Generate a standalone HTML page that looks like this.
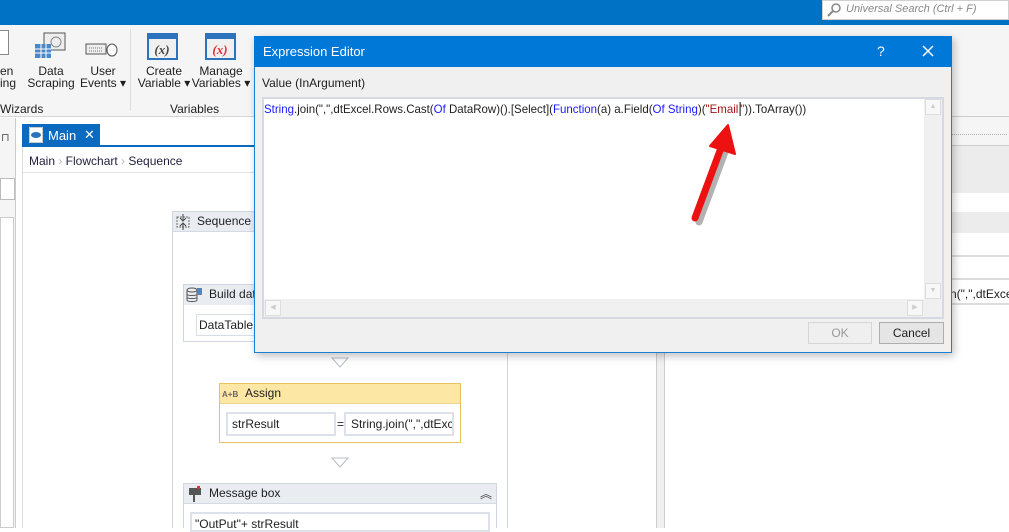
<!DOCTYPE html>
<html><head><meta charset="utf-8"><style>
*{margin:0;padding:0;box-sizing:border-box}
body{width:1009px;height:528px;overflow:hidden;background:#fff;font-family:"Liberation Sans",sans-serif;font-size:12px;color:#1e1e1e;position:relative}
.a{position:absolute}
.t{white-space:nowrap}
</style></head><body>
<!-- top bar -->
<div class="a" style="left:0;top:0;width:1009px;height:25px;background:#0072c6"></div>
<div class="a" style="left:822px;top:0;width:187px;height:20px;background:#fff;border:1px solid #d0d0d0"></div>
<svg class="a" style="left:826px;top:2px" width="16" height="16"><circle cx="10" cy="6" r="4" fill="none" stroke="#888" stroke-width="1.5"/><line x1="7" y1="9" x2="2" y2="14" stroke="#888" stroke-width="2"/></svg>
<div class="a t" style="left:846px;top:3px;font-size:11px;font-style:italic;color:#888">Universal Search (Ctrl + F)</div>
<!-- ribbon -->
<div class="a" style="left:0;top:25px;width:1009px;height:92px;background:#f5f5f5;border-bottom:1px solid #d6d6d6"></div>
<div class="a" style="left:0;top:30px;width:9px;height:25px;border:1px solid #888;border-left:none;background:#fff"></div>
<div class="a t" style="left:0;top:65px;line-height:12px;font-size:12px">en<br>ing</div>
<svg class="a" style="left:33px;top:32px" width="34" height="30"><rect x="11" y="1" width="21" height="17" fill="#eee" stroke="#555"/><circle cx="23" cy="10" r="5" fill="none" stroke="#888"/><rect x="2" y="12" width="16" height="14" fill="#4a88c8"/><path d="M2 17h16M2 21h16M8 12v14M13 12v14" stroke="#fff"/></svg>
<div class="a t" style="left:26px;top:65px;line-height:12px;font-size:12px;text-align:center;width:50px">Data<br>Scraping</div>
<svg class="a" style="left:84px;top:38px" width="36" height="20"><rect x="2" y="6" width="20" height="10" fill="#eee" stroke="#555"/><path d="M5 10h14M5 13h14" stroke="#777" stroke-dasharray="1 1"/><ellipse cx="28" cy="12" rx="5" ry="6" fill="#fff" stroke="#555"/></svg>
<div class="a t" style="left:80px;top:65px;line-height:12px;font-size:12px;text-align:center;width:46px">User<br>Events ▾</div>
<div class="a t" style="left:0;top:102px;font-size:12px">Wizards</div>
<div class="a" style="left:130px;top:29px;width:1px;height:82px;background:#ddd"></div>
<svg class="a" style="left:146px;top:32px" width="34" height="28"><rect x="1" y="1" width="31" height="27" fill="#2b73bc"/><rect x="3" y="7" width="27" height="19" fill="#f0f0f0"/><text x="16" y="22" font-size="13" font-weight="bold" font-style="italic" text-anchor="middle" fill="#444" font-family="Liberation Serif">(x)</text></svg>
<div class="a t" style="left:136px;top:65px;line-height:12px;font-size:12px;text-align:center;width:56px">Create<br>Variable ▾</div>
<svg class="a" style="left:204px;top:32px" width="34" height="28"><rect x="1" y="1" width="31" height="27" fill="#2b73bc"/><rect x="3" y="7" width="27" height="19" fill="#f0f0f0"/><text x="16" y="22" font-size="13" font-weight="bold" font-style="italic" text-anchor="middle" fill="#e0303a" font-family="Liberation Serif">(x)</text></svg>
<div class="a t" style="left:190px;top:65px;line-height:12px;font-size:12px;text-align:center;width:62px">Manage<br>Variables ▾</div>
<div class="a t" style="left:170px;top:102px;font-size:12px">Variables</div>
<!-- left panel -->
<div class="a" style="left:0;top:118px;width:16px;height:410px;background:#f5f5f5;border-right:1px solid #ccc"></div>
<div class="a t" style="left:1px;top:131px;font-size:11px;color:#555">⊓</div>
<div class="a" style="left:0;top:178px;width:15px;height:22px;background:#fff;border:1px solid #bbb"></div>
<div class="a" style="left:0;top:217px;width:14px;height:311px;background:#fff;border:1px solid #ccc"></div>
<!-- tab -->
<div class="a" style="left:22px;top:124px;width:78px;height:22px;background:#0a6ac0"></div>
<svg class="a" style="left:29px;top:127px" width="14" height="16"><rect x="0.5" y="0.5" width="13" height="15" fill="#fff" stroke="#ccc"/><ellipse cx="7" cy="8" rx="5" ry="3" fill="#2b73bc"/></svg>
<div class="a t" style="left:48px;top:128px;font-size:13px;color:#fff">Main</div>
<div class="a t" style="left:84px;top:127px;font-size:13px;color:#fff">✕</div>
<div class="a" style="left:22px;top:145px;width:640px;height:2px;background:#0a6ac0"></div>
<div class="a" style="left:22px;top:147px;width:1px;height:381px;background:#ddd"></div>
<div class="a" style="left:23px;top:172px;width:640px;height:1px;background:#e4e4e4"></div>
<div class="a t" style="left:29px;top:154px;font-size:12px;color:#1e1e3e">Main <span style="color:#bbb">›</span> Flowchart <span style="color:#bbb">›</span> Sequence</div>
<!-- right separator and panel -->
<div class="a" style="left:656px;top:118px;width:9px;height:410px;background:#f0f0f0;border-left:1px solid #ccc;border-right:1px solid #ccc"></div>
<div class="a" style="left:665px;top:116px;width:344px;height:30px;background:#f5f5f5;border-top:1px solid #ccc;border-bottom:1px solid #ccc"></div>
<div class="a" style="left:952px;top:134px;width:55px;height:1px;border-top:1px dotted #aaa"></div>
<div class="a" style="left:665px;top:146px;width:344px;height:47px;background:#ececec"></div>
<div class="a" style="left:665px;top:212px;width:344px;height:21px;background:#ececec"></div>
<div class="a" style="left:665px;top:255px;width:344px;height:2px;background:#ddd"></div>
<div class="a" style="left:665px;top:278px;width:344px;height:27px;background:#fff;border-top:2px solid #ddd;border-bottom:2px solid #ddd"></div>
<div class="a t" style="left:950px;top:287px;font-size:12px">n(",",dtExcel</div>
<!-- sequence -->
<div class="a" style="left:172px;top:211px;width:336px;height:317px;border:1px solid #cfd6e2;border-bottom:none"></div>
<div class="a" style="left:173px;top:212px;width:334px;height:20px;background:#e9edf2;border-bottom:1px solid #d4dae4"></div>
<svg class="a" style="left:175px;top:214px" width="16" height="16"><rect x="2" y="3" width="12" height="10" fill="none" stroke="#666" stroke-dasharray="2 1"/><path d="M8 0v6M5 4l3 3 3-3M8 16v-6M5 12l3-3 3 3" stroke="#444" fill="none"/></svg>
<div class="a t" style="left:197px;top:214px;font-size:12px">Sequence</div>
<!-- build data -->
<div class="a" style="left:183px;top:284px;width:200px;height:58px;border:1px solid #cfd6e2"></div>
<div class="a" style="left:184px;top:285px;width:198px;height:20px;background:#e9edf2"></div>
<svg class="a" style="left:185px;top:286px" width="18" height="18"><ellipse cx="7" cy="4" rx="5" ry="2" fill="none" stroke="#555"/><path d="M2 4v10c0 2 10 2 10 0V4M2 8c0 2 10 2 10 0M2 11c0 2 10 2 10 0" fill="none" stroke="#555"/><rect x="12" y="2" width="5" height="7" fill="#4a88c8"/></svg>
<div class="a t" style="left:209px;top:287px;font-size:12px">Build dat</div>
<div class="a" style="left:196px;top:314px;width:70px;height:22px;border:1px solid #d8dde6;background:#fff"></div>
<div class="a t" style="left:199px;top:318px;font-size:12px">DataTable.</div>
<!-- triangles -->
<svg class="a" style="left:331px;top:357px" width="18" height="11"><path d="M1 1h16L9 10z" fill="#fff" stroke="#b8bcc6"/></svg>
<svg class="a" style="left:331px;top:457px" width="18" height="11"><path d="M1 1h16L9 10z" fill="#fff" stroke="#b8bcc6"/></svg>
<!-- assign -->
<div class="a" style="left:219px;top:383px;width:242px;height:60px;border:1px solid #e8c25c;background:#fff"></div>
<div class="a" style="left:220px;top:384px;width:240px;height:20px;background:#fde7a4;border-bottom:1px solid #eed590"></div>
<div class="a t" style="left:222px;top:390px;font-size:8px;font-weight:bold;color:#666">A+B</div>
<div class="a t" style="left:245px;top:386px;font-size:12px">Assign</div>
<div class="a" style="left:226px;top:412px;width:110px;height:24px;border:2px solid #dde2ea;background:#fff"></div>
<div class="a t" style="left:232px;top:417px;font-size:12px">strResult</div>
<div class="a t" style="left:337px;top:417px;font-size:12px">=</div>
<div class="a" style="left:344px;top:412px;width:110px;height:24px;border:2px solid #dde2ea;background:#fff;overflow:hidden"><div class="t" style="padding:3px 0 0 5px;font-size:12px">String.join(",",dtExc</div></div>
<!-- message box -->
<div class="a" style="left:183px;top:483px;width:314px;height:45px;border:1px solid #cfd6e2;border-bottom:none"></div>
<div class="a" style="left:184px;top:484px;width:312px;height:20px;background:#e9edf2;border-bottom:1px solid #d4dae4"></div>
<svg class="a" style="left:187px;top:486px" width="16" height="16"><rect x="2" y="2" width="12" height="7" fill="#555"/><rect x="10" y="0" width="3" height="3" fill="#d33"/><path d="M7 9v7" stroke="#555" stroke-width="2"/></svg>
<div class="a t" style="left:209px;top:486px;font-size:12px">Message box</div>
<div class="a t" style="left:480px;top:485px;font-size:12px;color:#444">︽</div>
<div class="a" style="left:190px;top:512px;width:300px;height:20px;border:2px solid #dde2ea;background:#fff"><div class="t" style="padding:3px 0 0 3px;font-size:12px">"OutPut"+  strResult</div></div>
<!-- dialog -->
<div class="a" style="left:254px;top:36px;width:698px;height:317px;background:#f0f0f0;border:1px solid #1a80d4;box-shadow:2px 3px 8px rgba(0,0,0,.25)"></div>
<div class="a" style="left:254px;top:36px;width:698px;height:31px;background:#0078d7"></div>
<div class="a t" style="left:263px;top:44px;font-size:13px;color:#fff">Expression Editor</div>
<div class="a t" style="left:877px;top:43px;font-size:14px;color:#fff">?</div>
<svg class="a" style="left:922px;top:45px" width="12" height="12"><path d="M1 1l10 10M11 1L1 11" stroke="#fff" stroke-width="1.5"/></svg>
<div class="a t" style="left:262px;top:76px;font-size:12px">Value (InArgument)</div>
<div class="a" style="left:262px;top:97px;width:682px;height:222px;background:#fff;border:2px solid #d4d9e2"></div>
<div class="a" style="left:264px;top:299px;width:678px;height:18px;background:#f0f0f0"></div>
<div class="a" style="left:924px;top:99px;width:18px;height:200px;background:#f0f0f0"></div>
<div class="a" style="left:925px;top:99px;width:16px;height:16px;border:1px solid #ddd;background:#f7f7f7;font-size:7px;color:#ccc;text-align:center;line-height:14px">▲</div>
<div class="a" style="left:925px;top:283px;width:16px;height:16px;border:1px solid #ddd;background:#f7f7f7;font-size:7px;color:#ccc;text-align:center;line-height:14px">▼</div>
<div class="a" style="left:265px;top:300px;width:16px;height:16px;border:1px solid #ddd;background:#f7f7f7;font-size:7px;color:#ccc;text-align:center;line-height:14px">◀</div>
<div class="a" style="left:907px;top:300px;width:16px;height:16px;border:1px solid #ddd;background:#f7f7f7;font-size:7px;color:#ccc;text-align:center;line-height:14px">▶</div>
<div class="a t" style="left:264px;top:102px;font-size:12px;transform:scaleX(0.957);transform-origin:left"><span style="color:#1a1aff">String</span>.join(",",dtExcel.Rows.Cast(<span style="color:#1a1aff">Of</span> DataRow)().[Select](<span style="color:#1a1aff">Function</span>(a) a.Field(<span style="color:#1a1aff">Of</span> <span style="color:#1a1aff">String</span>)(<span style="color:#a31515">"Email</span><span style="border-left:1px solid #000;margin-left:1px"></span><span style="color:#a31515">"</span>)).ToArray())</div>
<div class="a" style="left:808px;top:322px;width:64px;height:22px;border:1px solid #d6d6d6;background:#efefef;color:#999;text-align:center;line-height:20px;font-size:12px">OK</div>
<div class="a" style="left:879px;top:322px;width:65px;height:22px;border:1px solid #adadad;background:#e5e5e5;text-align:center;line-height:20px;font-size:12px">Cancel</div>
<!-- red arrow -->
<svg class="a" style="left:680px;top:118px" width="70" height="115"><path d="M17 102L43 32" stroke="rgba(0,0,0,.3)" stroke-width="7" stroke-linecap="round" transform="translate(2,2)"/><path d="M15 100L41 30" stroke="#ee1111" stroke-width="7" stroke-linecap="round"/><path d="M48 7L55 36L30 28Z" fill="#ee1111" stroke="#ee1111" stroke-width="2" stroke-linejoin="round"/></svg>
</body></html>
